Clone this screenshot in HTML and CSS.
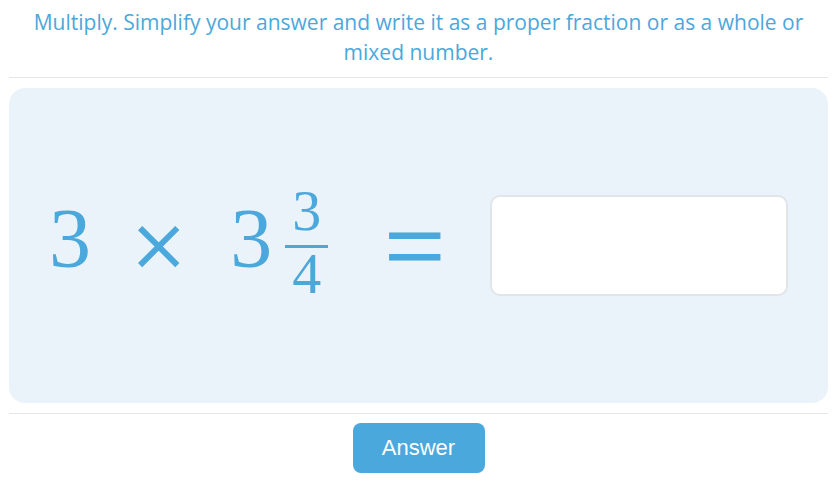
FILE: index.html
```html
<!DOCTYPE html>
<html lang="en">
<head>
    <meta charset="UTF-8">
    <meta name="viewport" content="width=device-width, initial-scale=1.0">
    <title>Multiply Mixed Numbers</title>
    <link rel="stylesheet" href="styles.css">
</head>
<body>
    <div class="question">
        <p class="prompt">Multiply. Simplify your answer and write it as a proper fraction or as a whole or mixed number.</p>

        <div class="panel">
            <div class="expr">
                <span class="num">3</span>
                <span class="op times">&times;</span>
                <span class="num">3</span>
                <span class="frac">
                    <span class="frac-top">3</span>
                    <span class="frac-bar"></span>
                    <span class="frac-bottom">4</span>
                </span>
                <span class="op equals">=</span>
            </div>
            <input class="answer-box" type="text" aria-label="Your answer">
        </div>

        <div class="actions">
            <button class="btn" type="button">Answer</button>
        </div>
    </div>
</body>
</html>
```
FILE: styles.css
```css
body {
    margin: 0;
    font-family: 'Open Sans', Lato, sans-serif;
    color: #4aa8dc;
    background: #fff;
}
.question {
    margin: 0 12px 0 9px;
}
.prompt {
    margin: 0;
    padding: 7px 8px 10px;
    font-size: 21px;
    line-height: 30px;
    text-align: center;
    border-bottom: 1px solid #e3e6ea;
}
.panel {
    display: flex;
    align-items: center;
    margin-top: 10px;
    height: 315px;
    padding: 0 40px 0 40px;
    background-color: #eaf3f9;
    border-radius: 16px;
    box-sizing: border-box;
}
.expr {
    display: flex;
    align-items: center;
    color: #4aa8dc;
    font-family: "Liberation Serif", "Times New Roman", Times, "Noto Serif", "DejaVu Serif", serif;
}
.num {
    font-family: inherit;
    font-size: 84px;
    line-height: 1;
    margin-bottom: 14px;
}
.op {
    font-family: inherit;
    line-height: 1;
}
.times {
    font-size: 98px;
    margin: 0 44px 0 40px;
    -webkit-text-stroke: 1px #4aa8dc;
}
.equals {
    font-size: 108px;
    margin: 0 0 0 56px;
    -webkit-text-stroke: 1px #4aa8dc;
}
.frac {
    display: flex;
    flex-direction: column;
    align-items: center;
    margin: 0 0 6px 13px;
    font-family: inherit;
    font-size: 58px;
    line-height: 1;
}
.frac-bar {
    width: 43px;
    height: 3px;
    margin: 5px 0 -3px;
    background-color: #4aa8dc;
}
.answer-box {
    width: 298px;
    height: 101px;
    margin-left: auto;
    box-sizing: border-box;
    border: 2px solid #e1e5ea;
    border-radius: 10px;
    background-color: #fff;
    font-size: 40px;
    outline: none;
}
.actions {
    margin-top: 10px;
    padding-top: 9px;
    border-top: 1px solid #e3e6ea;
    text-align: center;
}
.btn {
    width: 132px;
    height: 50px;
    border: none;
    border-radius: 8px;
    background-color: #4aa8dc;
    color: #fff;
    font-family: 'Liberation Sans', Arial, sans-serif;
    font-size: 22px;
}
```
